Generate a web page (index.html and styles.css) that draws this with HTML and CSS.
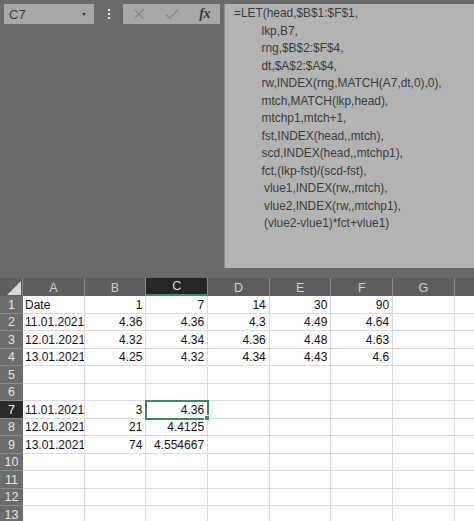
FILE: index.html
```html
<!DOCTYPE html>
<html>
<head>
<meta charset="utf-8">
<link rel="stylesheet" href="styles.css">
</head>
<body>
<div class="app">
  <div class="topbar">
    <div class="namebox">
      <span class="ref">C7</span>
      <span class="caret"></span>
    </div>
    <div class="dots"><span></span><span></span><span></span></div>
    <div class="fbtns">
      <svg class="ico" width="12" height="12" viewBox="0 0 12 12"><path d="M1.5 1.5 L10.5 10.5 M10.5 1.5 L1.5 10.5" stroke="#8a8a8a" stroke-width="1.3" fill="none"/></svg>
      <svg class="ico" width="14" height="12" viewBox="0 0 14 12"><path d="M1 6.5 L5 10.5 L13 1.5" stroke="#8a8a8a" stroke-width="1.5" fill="none"/></svg>
      <span class="fx">fx</span>
    </div>
    <div class="fbox">
      <div>=LET(head,$B$1:$F$1,</div>
      <div class="in1">lkp,B7,</div>
      <div class="in1">rng,$B$2:$F$4,</div>
      <div class="in1">dt,$A$2:$A$4,</div>
      <div class="in1">rw,INDEX(rng,MATCH(A7,dt,0),0),</div>
      <div class="in1">mtch,MATCH(lkp,head),</div>
      <div class="in1">mtchp1,mtch+1,</div>
      <div class="in1">fst,INDEX(head,,mtch),</div>
      <div class="in1">scd,INDEX(head,,mtchp1),</div>
      <div class="in1">fct,(lkp-fst)/(scd-fst),</div>
      <div class="in2">vlue1,INDEX(rw,,mtch),</div>
      <div class="in2">vlue2,INDEX(rw,,mtchp1),</div>
      <div class="in2">(vlue2-vlue1)*fct+vlue1)</div>
    </div>
  </div>
  <div class="sheet">
    <div class="corner"><span class="tri"></span></div>
    <div class="ch">A</div><div class="ch">B</div><div class="ch sel">C</div><div class="ch">D</div><div class="ch">E</div><div class="ch">F</div><div class="ch">G</div><div class="ch"></div>

    <div class="rh">1</div><div class="c">Date</div><div class="c n">1</div><div class="c n">7</div><div class="c n">14</div><div class="c n">30</div><div class="c n">90</div><div class="c"></div><div class="c"></div>
    <div class="rh">2</div><div class="c">11.01.2021</div><div class="c n">4.36</div><div class="c n">4.36</div><div class="c n">4.3</div><div class="c n">4.49</div><div class="c n">4.64</div><div class="c"></div><div class="c"></div>
    <div class="rh">3</div><div class="c">12.01.2021</div><div class="c n">4.32</div><div class="c n">4.34</div><div class="c n">4.36</div><div class="c n">4.48</div><div class="c n">4.63</div><div class="c"></div><div class="c"></div>
    <div class="rh">4</div><div class="c">13.01.2021</div><div class="c n">4.25</div><div class="c n">4.32</div><div class="c n">4.34</div><div class="c n">4.43</div><div class="c n">4.6</div><div class="c"></div><div class="c"></div>
    <div class="rh">5</div><div class="c"></div><div class="c"></div><div class="c"></div><div class="c"></div><div class="c"></div><div class="c"></div><div class="c"></div><div class="c"></div>
    <div class="rh">6</div><div class="c"></div><div class="c"></div><div class="c"></div><div class="c"></div><div class="c"></div><div class="c"></div><div class="c"></div><div class="c"></div>
    <div class="rh sel">7</div><div class="c">11.01.2021</div><div class="c n">3</div><div class="c n active">4.36</div><div class="c"></div><div class="c"></div><div class="c"></div><div class="c"></div><div class="c"></div>
    <div class="rh">8</div><div class="c">12.01.2021</div><div class="c n">21</div><div class="c n">4.4125</div><div class="c"></div><div class="c"></div><div class="c"></div><div class="c"></div><div class="c"></div>
    <div class="rh">9</div><div class="c">13.01.2021</div><div class="c n">74</div><div class="c n">4.554667</div><div class="c"></div><div class="c"></div><div class="c"></div><div class="c"></div><div class="c"></div>
    <div class="rh">10</div><div class="c"></div><div class="c"></div><div class="c"></div><div class="c"></div><div class="c"></div><div class="c"></div><div class="c"></div><div class="c"></div>
    <div class="rh">11</div><div class="c"></div><div class="c"></div><div class="c"></div><div class="c"></div><div class="c"></div><div class="c"></div><div class="c"></div><div class="c"></div>
    <div class="rh">12</div><div class="c"></div><div class="c"></div><div class="c"></div><div class="c"></div><div class="c"></div><div class="c"></div><div class="c"></div><div class="c"></div>
    <div class="rh">13</div><div class="c"></div><div class="c"></div><div class="c"></div><div class="c"></div><div class="c"></div><div class="c"></div><div class="c"></div><div class="c"></div>
  </div>
</div>
</body>
</html>
```
FILE: styles.css
```css
html, body {
  margin: 0;
  padding: 0;
  background: #6a6a6a;
}
.app {
  width: 474px;
  height: 521px;
  overflow: hidden;
  font-family: "Liberation Sans", Arial, sans-serif;
}
.topbar {
  display: flex;
  align-items: flex-start;
  height: 278px;
  box-sizing: border-box;
  padding: 4px 0 0 4px;
  background: #6a6a6a;
}
.namebox {
  width: 90px;
  height: 20px;
  box-sizing: border-box;
  background: #a8a8a8;
  display: flex;
  align-items: center;
  justify-content: space-between;
  padding: 0 8px 0 5px;
}
.ref {
  font-size: 13px;
  color: #3c3c3c;
}
.caret {
  width: 0;
  height: 0;
  border-left: 2.5px solid transparent;
  border-right: 2.5px solid transparent;
  border-top: 3px solid #404040;
}
.dots {
  width: 29px;
  height: 20px;
  display: flex;
  flex-direction: column;
  align-items: center;
  justify-content: center;
  gap: 2px;
}
.dots span {
  width: 2px;
  height: 2px;
  background: #e6e6e6;
}
.fbtns {
  width: 97px;
  height: 20px;
  background: #a8a8a8;
  display: flex;
  align-items: center;
  justify-content: space-between;
  padding: 0 10px 0 10px;
  box-sizing: border-box;
}
.fx {
  font-family: "Liberation Serif", serif;
  font-style: italic;
  font-weight: bold;
  font-size: 14px;
  color: #3a3a3a;
  letter-spacing: -0.5px;
}
.fbox {
  flex: 1;
  margin-left: 4px;
  height: 264px;
  box-sizing: border-box;
  background: #b3b3b3;
  border-left: 1px solid #8c8c8c;
  padding: 1px 0 0 9px;
  font-size: 11.9px;
  line-height: 17.5px;
  color: #3c3c3c;
  white-space: nowrap;
}
.in1 { padding-left: 27.5px; }
.in2 { padding-left: 30px; }

.sheet {
  display: grid;
  grid-template-columns: 23px repeat(8, 61.7px);
  grid-template-rows: 18px;
  grid-auto-rows: 17.5px;
  height: 243px;
  overflow: hidden;
  background: #ffffff;
  font-size: 12px;
}
.corner {
  background: #5e5e5e;
  border-right: 1px solid #8a8a8a;
  position: relative;
}
.tri {
  position: absolute;
  right: 1px;
  bottom: 1px;
  width: 0;
  height: 0;
  border-left: 14px solid transparent;
  border-bottom: 14px solid #d8d8d8;
}
.ch {
  background: #5e5e5e;
  color: #cfcfcf;
  font-size: 12.5px;
  border-right: 1px solid #8a8a8a;
  display: flex;
  align-items: center;
  justify-content: center;
  box-sizing: border-box;
  padding-top: 2px;
}
.ch.sel {
  background: #262626;
  color: #d8d8d8;
  border-bottom: 2px solid #3f8a5c;
  padding-top: 0;
}
.rh {
  background: #6c6c6c;
  color: #e4e4e4;
  font-size: 12.5px;
  border-bottom: 1px solid #8a8a8a;
  display: flex;
  align-items: center;
  justify-content: center;
  box-sizing: border-box;
  padding-top: 1px;
}
.rh.sel {
  background: #2a2a2a;
  color: #f0f0f0;
}
.c {
  border-right: 1px solid #dadada;
  border-bottom: 1px solid #dadada;
  box-sizing: border-box;
  color: #111111;
  display: flex;
  align-items: center;
  padding: 1px 3px 0 2px;
  white-space: nowrap;
  overflow: hidden;
}
.n {
  justify-content: flex-end;
}
.active {
  position: relative;
  z-index: 1;
  overflow: visible;
  outline: 2px solid #46855c;
  outline-offset: -1px;
}
.active::after {
  content: "";
  position: absolute;
  right: -3px;
  bottom: -3px;
  width: 4px;
  height: 4px;
  background: #46855c;
  border: 1px solid #ffffff;
}
```
